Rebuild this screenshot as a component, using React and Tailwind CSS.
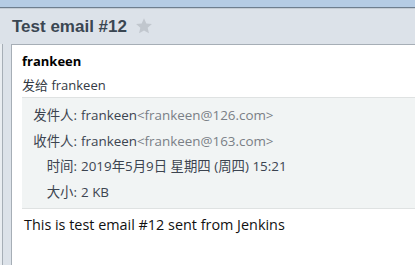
export default function App() {
  const rows = [
    { label: "发件人:", name: "frankeen", addr: "<frankeen@126.com>" },
    { label: "收件人:", name: "frankeen", addr: "<frankeen@163.com>" },
    { label: "时间:", name: "2019年5月9日 星期四 (周四) 15:21" },
    { label: "大小:", name: "2 KB" },
  ];
  return (
    <div className="w-[415px] h-[265px] flex flex-col overflow-hidden bg-[#dce2e9] font-['Open_Sans','Noto_Sans_CJK_SC',sans-serif]">
      <div className="h-[7px] shrink-0 bg-[#b5cce4]" />
      <div className="h-px shrink-0 bg-[#6e7e8e]" />
      <div className="h-[36px] shrink-0 flex items-center pl-[12px] gap-[8px] border-t border-[#c4ccd4]">
        <span className="text-[17px] font-bold text-[#3a4652] leading-none font-['Liberation_Sans',sans-serif]">Test email #12</span>
        <svg width="18" height="18" viewBox="0 0 24 24" className="mt-[-1px]">
          <path d="M12 1.8l3.1 6.9 7.4.7-5.6 5 1.7 7.4L12 18l-6.6 3.8 1.7-7.4-5.6-5 7.4-.7z" fill="#c1c7ce" />
        </svg>
      </div>
      <div className="flex-1 flex min-h-0">
        <div className="w-[11px] shrink-0 flex">
          <div className="w-[2px] bg-[#e9edf1]" />
          <div className="w-px bg-[#a6aeb6]" />
          <div className="flex-1 bg-[#dce2e9]" />
        </div>
        <div className="flex-1 bg-white border-l border-t border-[#a6aeb6] pl-[10px] pt-[7px]">
          <div className="text-[13px] font-bold text-black leading-[18px]">frankeen</div>
          <div className="text-[13px] text-[#333a44] leading-[20px] mt-[5px]">发给 frankeen</div>
          <div className="mt-[2px] bg-[#f1f4f4] border-t border-b border-[#dfe2e2] pt-[5px] pb-[3px] text-[13.4px] leading-[25.5px] text-[#3c4450]">
            {rows.map((r) => (
              <div key={r.label} className="flex">
                <span className="w-[55px] text-right shrink-0">{r.label}</span>
                <span className="ml-[4px] whitespace-nowrap">
                  {r.name}
                  {r.addr && <span className="text-[#7a7f86]">{r.addr}</span>}
                </span>
              </div>
            ))}
          </div>
          <div className="pl-[2px] pt-[5px] text-[14.4px] leading-[22px] text-[#111]">
            This is test email #12 sent from Jenkins
          </div>
        </div>
      </div>
    </div>
  );
}
